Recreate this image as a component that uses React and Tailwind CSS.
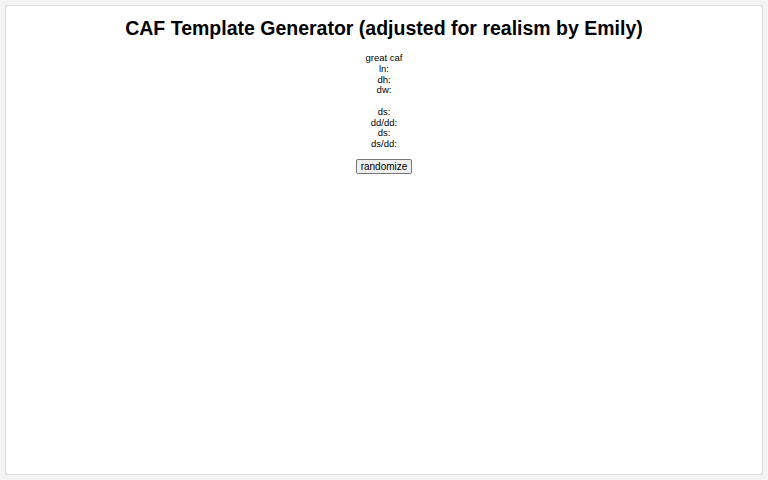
export default function App() {
  const lines = ['great caf', 'ln:', 'dh:', 'dw:', '', 'ds:', 'dd/dd:', 'ds:', 'ds/dd:'];
  return (
    <div className="h-[480px] w-[768px] bg-[#f4f4f4] p-[5px] font-['Liberation_Sans',Arial,sans-serif] text-black">
      <div className="h-full border border-[#dcdcdc] bg-white">
        <h1 className="mt-[10px] text-center text-[19.5px] font-bold leading-[24px]">
          CAF Template Generator (adjusted for realism by Emily)
        </h1>
        <div className="mt-[13px] text-center text-[9.5px] leading-[10.75px]">
          {lines.map((l, i) => (
            <div key={i} className="h-[10.75px]">{l}</div>
          ))}
        </div>
        <div className="mt-[9px] flex justify-center">
          <button className="h-[15px] rounded-[2px] border border-[#767676] bg-[#efefef] px-[4px] text-[10px] leading-[13px]">
            randomize
          </button>
        </div>
      </div>
    </div>
  );
}
